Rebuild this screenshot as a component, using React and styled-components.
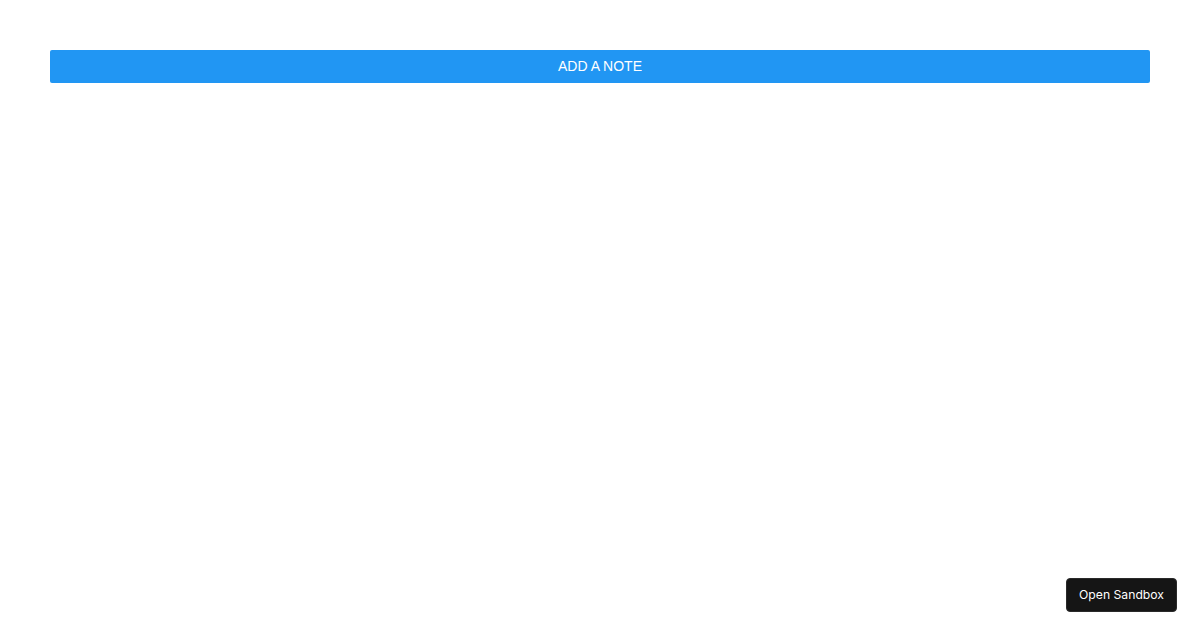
import React from "react";
import styled, { createGlobalStyle } from "styled-components";

const GlobalStyle = createGlobalStyle`
  body {
    margin: 0;
    background: #fff;
    font-family: "Liberation Sans", Arial, sans-serif;
  }
`;

const Page = styled.div`
  padding: 50px;
`;

const AddButton = styled.button`
  display: block;
  width: 100%;
  height: 33px;
  padding: 0 0 2px;
  border: none;
  border-radius: 2px;
  background-color: #2196f3;
  color: #fff;
  font-family: "Liberation Sans", Arial, sans-serif;
  font-size: 14px;
  text-transform: uppercase;
  cursor: pointer;
`;

const SandboxLink = styled.a`
  position: fixed;
  right: 23px;
  bottom: 18px;
  display: flex;
  align-items: center;
  justify-content: center;
  width: 111px;
  height: 34px;
  padding-bottom: 2px;
  box-sizing: border-box;
  border-radius: 4px;
  background-color: #151515;
  border: 1px solid #2a2a2a;
  color: #fff;
  font-family: Inter, "Liberation Sans", sans-serif;
  font-size: 12.2px;
  text-decoration: none;
`;

const App = () => {
  return (
    <Page>
      <GlobalStyle />
      <AddButton>Add a note</AddButton>
      <SandboxLink href="#">Open Sandbox</SandboxLink>
    </Page>
  );
};

export default App;
